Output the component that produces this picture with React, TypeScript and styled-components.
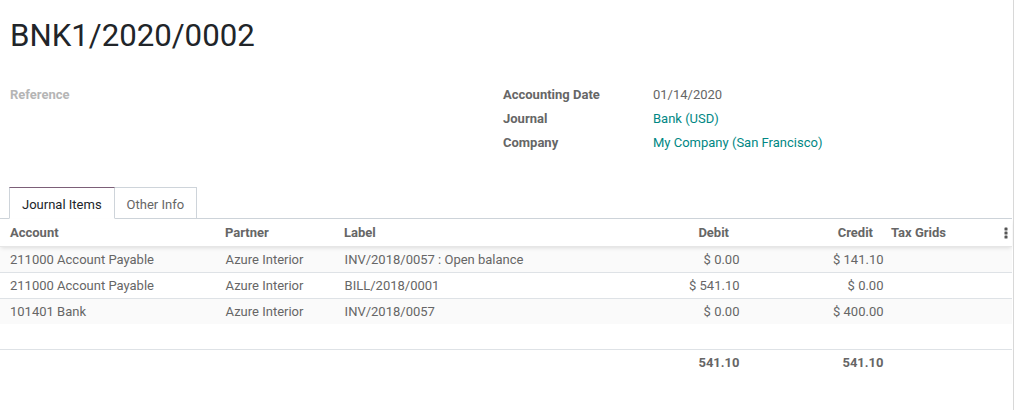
import { createGlobalStyle } from "styled-components";
import styled from "styled-components";

const GlobalStyle = createGlobalStyle`
  html, body {
    margin: 0;
    padding: 0;
    background: #fff;
    overflow: hidden;
  }
  body {
    font-family: Roboto, "Noto Sans", sans-serif;
    font-size: 13px;
    color: #666;
  }
`;

const Page = styled.div`
  width: 1017px;
  height: 410px;
  background: #fff;
  border-right: 0 solid #fff;
`;

const Sheet = styled.div`
  width: 1014px;
  height: 410px;
  box-sizing: border-box;
  border-right: 1px solid #d8d8d8;
  padding-right: 1px;
  overflow: hidden;
`;

const Title = styled.h1`
  margin: 0;
  padding: 16px 0 0 10px;
  height: 86px;
  box-sizing: border-box;
  font-size: 31.2px;
  line-height: 40px;
  font-weight: 400;
  color: #212529;
`;

const InfoGroup = styled.div`
  display: grid;
  grid-template-columns: 493px 150px 1fr;
  grid-auto-rows: 24px;
  padding-left: 10px;
  height: 101px;
`;

const Label = styled.div<{ $muted?: boolean }>`
  font-weight: 700;
  line-height: 17px;
  color: ${(p) => (p.$muted ? "#b5b5b5" : "#666")};
`;

const Value = styled.div<{ $link?: boolean }>`
  line-height: 17px;
  color: ${(p) => (p.$link ? "#008784" : "#666")};
`;

const TabStrip = styled.div`
  display: flex;
  padding-left: 9px;
  height: 31px;
  border-bottom: 1px solid #ced4da;
`;

const Tab = styled.div<{ $active?: boolean }>`
  box-sizing: border-box;
  padding: 0 12px;
  line-height: 33px;
  border: 1px solid #ced4da;
  border-left-width: ${(p) => (p.$active ? "1px" : "0")};
  border-top-color: ${(p) => (p.$active ? "#7c5f78" : "#ced4da")};
  border-bottom: ${(p) => (p.$active ? "1px solid #fff" : "0")};
  background: #fff;
  color: ${(p) => (p.$active ? "#212529" : "#666")};
  height: ${(p) => (p.$active ? "32px" : "31px")};
`;

const columns = "215px 119px 269px 126px 144px 8px 1fr";

const HeaderRow = styled.div`
  position: relative;
  z-index: 1;
  display: grid;
  grid-template-columns: ${columns};
  padding-left: 10px;
  height: 28px;
  line-height: 27px;
  font-weight: 700;
  color: #666;
  box-shadow: 0 2px 4px -1px rgba(0, 0, 0, 0.12);
  border-bottom: 1px solid #e6e6e6;
  box-sizing: border-box;
`;

const HeaderCell = styled.div<{ $right?: boolean }>`
  text-align: ${(p) => (p.$right ? "right" : "left")};
  padding-right: ${(p) => (p.$right ? "10px" : "0")};
  white-space: nowrap;
`;

const HeaderEnd = styled.div`
  display: flex;
  justify-content: space-between;
  align-items: center;
  padding-right: 4px;
  svg {
    display: block;
  }
`;

const Row = styled.div<{ $striped?: boolean }>`
  display: grid;
  grid-template-columns: ${columns};
  padding-left: 10px;
  height: 26px;
  line-height: 26px;
  box-sizing: border-box;
  background: ${(p) => (p.$striped ? "#fafafa" : "#fff")};
  border-bottom: 1px solid #dee2e6;
  &:last-of-type {
    border-bottom: 0;
    height: 25px;
  }
`;

const Cell = styled.div<{ $right?: boolean; $inset?: boolean }>`
  text-align: ${(p) => (p.$right ? "right" : "left")};
  padding-left: ${(p) => (p.$inset ? "0.6px" : "0")};
  margin-right: ${(p) => (p.$right ? "-0.5px" : "0")};
  white-space: nowrap;
`;

const TotalRow = styled.div`
  display: grid;
  grid-template-columns: ${columns};
  margin-top: 25px;
  padding-left: 10px;
  height: 27px;
  line-height: 26px;
  font-weight: 700;
  border-top: 1px solid #dee2e6;
  box-sizing: border-box;
`;

const rows = [
  { account: "211000 Account Payable", label: "INV/2018/0057 : Open balance", debit: "$ 0.00", credit: "$ 141.10" },
  { account: "211000 Account Payable", label: "BILL/2018/0001", debit: "$ 541.10", credit: "$ 0.00" },
  { account: "101401 Bank", label: "INV/2018/0057", debit: "$ 0.00", credit: "$ 400.00" },
];

export default function App() {
  return (
    <Page>
      <GlobalStyle />
      <Sheet>
        <Title>BNK1/2020/0002</Title>
        <InfoGroup>
          <Label $muted>Reference</Label>
          <Label>Accounting Date</Label>
          <Value>01/14/2020</Value>
          <div />
          <Label>Journal</Label>
          <Value $link>Bank (USD)</Value>
          <div />
          <Label>Company</Label>
          <Value $link>My Company (San Francisco)</Value>
        </InfoGroup>
        <TabStrip>
          <Tab $active>Journal Items</Tab>
          <Tab>Other Info</Tab>
        </TabStrip>
        <HeaderRow>
          <HeaderCell>Account</HeaderCell>
          <HeaderCell>Partner</HeaderCell>
          <HeaderCell>Label</HeaderCell>
          <HeaderCell $right>Debit</HeaderCell>
          <HeaderCell $right>Credit</HeaderCell>
          <div />
          <HeaderEnd>
            <span>Tax Grids</span>
            <svg width="4" height="12" viewBox="0 0 4 12" fill="#555">
              <rect x="0.5" y="0.5" width="3" height="3" rx="0.6" />
              <rect x="0.5" y="4.5" width="3" height="3" rx="0.6" />
              <rect x="0.5" y="8.5" width="3" height="3" rx="0.6" />
            </svg>
          </HeaderEnd>
        </HeaderRow>
        <div>
          {rows.map((r, i) => (
            <Row key={i} $striped={i % 2 === 0}>
              <Cell>{r.account}</Cell>
              <Cell $inset>Azure Interior</Cell>
              <Cell $inset>{r.label}</Cell>
              <Cell $right>{r.debit}</Cell>
              <Cell $right>{r.credit}</Cell>
            </Row>
          ))}
        </div>
        <TotalRow>
          <div />
          <div />
          <div />
          <Cell $right>541.10</Cell>
          <Cell $right>541.10</Cell>
        </TotalRow>
      </Sheet>
    </Page>
  );
}
